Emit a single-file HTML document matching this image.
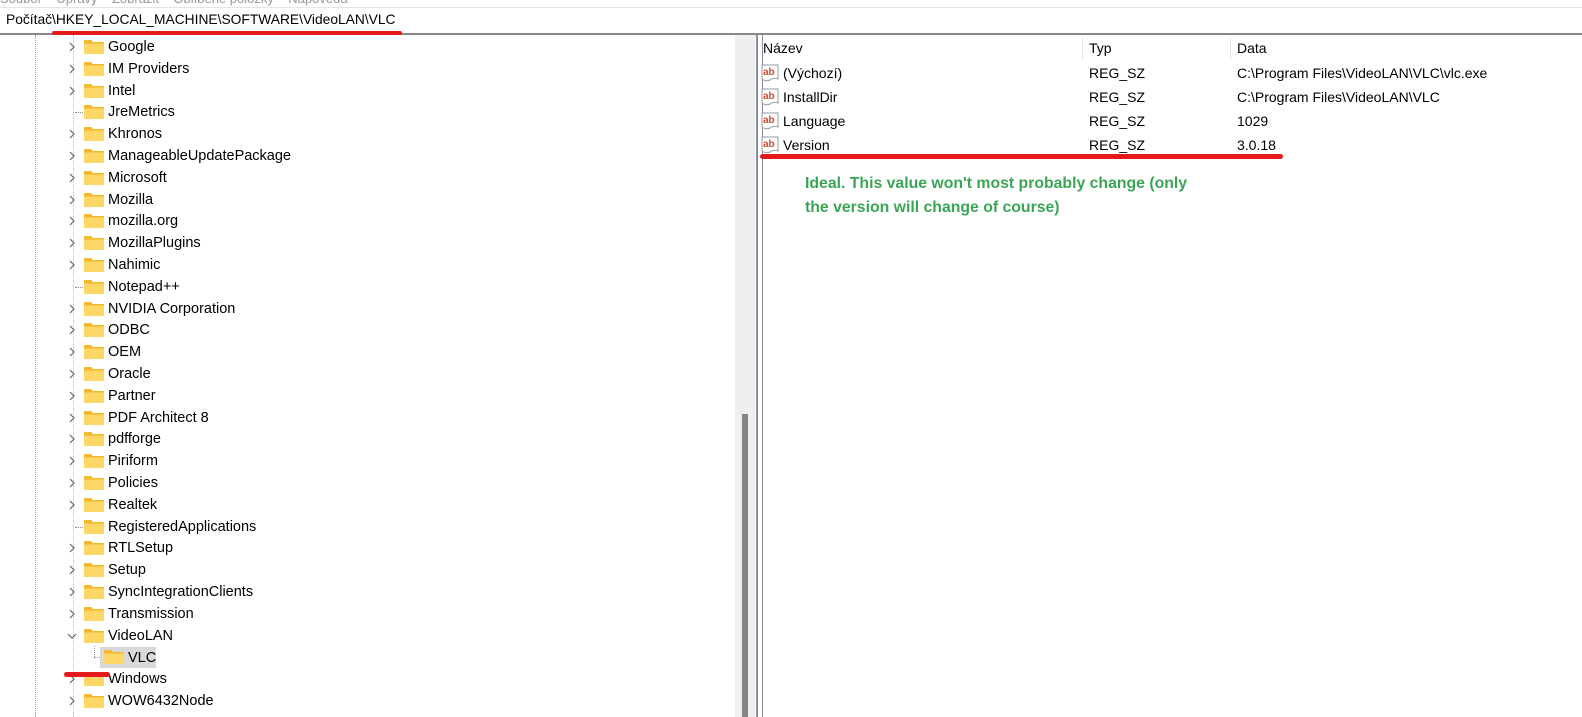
<!DOCTYPE html>
<html><head><meta charset="utf-8"><style>
body{margin:0;width:1582px;height:717px;overflow:hidden;background:#fff;font-family:"Liberation Sans",sans-serif;font-size:14px;color:#000;position:relative}
.a{position:absolute;white-space:nowrap}
.r{position:absolute;left:0;height:22px;line-height:22px;width:730px;font-size:14.5px}
.r .t{position:absolute;left:108px;top:0}
.r .f{position:absolute;left:84px;top:4px;width:20px;height:14px}
.r .c{position:absolute;left:67px;top:6px}
.r .d{position:absolute;left:75px;top:11px;width:8px;border-top:1px dotted #888}
.ab{position:absolute;left:761px;width:19px;height:18px}
.red{position:absolute;background:#e3191c;border-radius:3px}
</style></head><body>
<div class="a" style="left:0;top:-9px;color:#999;font-size:13px">Soubor&nbsp;&nbsp;&nbsp;&nbsp;Úpravy&nbsp;&nbsp;&nbsp;&nbsp;Zobrazit&nbsp;&nbsp;&nbsp;&nbsp;Oblíbené položky&nbsp;&nbsp;&nbsp;&nbsp;Nápověda</div>
<div class="a" style="left:0;top:7px;width:1582px;height:26px;background:#fff;border-top:1px solid #e5e5e5"></div>
<div class="a" style="left:6px;top:12px;font-size:13.8px">Počítač\HKEY_LOCAL_MACHINE\SOFTWARE\VideoLAN\VLC</div>
<div class="a" style="left:0;top:33px;width:1582px;height:2px;background:#888"></div>
<div class="red" style="left:52px;top:31px;width:350px;height:4px"></div>
<div class="a" style="left:35px;top:35px;height:682px;border-left:1px dotted #999"></div>
<div class="a" style="left:73px;top:35px;height:682px;border-left:1px dotted #bbb"></div>
<svg width="0" height="0" style="position:absolute"><defs>
<symbol id="ch" viewBox="0 0 10 10"><path d="M3 1 L7 5 L3 9" fill="none" stroke="#666" stroke-width="1.2"/></symbol>
<symbol id="fo" viewBox="0 0 20 14"><path d="M0 1 Q0 0 1 0 H7 L9 2 H19 Q20 2 20 3 V13 Q20 14 19 14 H1 Q0 14 0 13Z" fill="#f3b72c"/><rect x="0" y="3.5" width="20" height="10.5" rx="1" fill="#fcd766"/></symbol>
<symbol id="abi" viewBox="0 0 19 18"><path d="M1 1 H17 V15 Q13 13 9 16 Q5 18 1 15Z" fill="#fff" stroke="#9a9a9a"/><text x="2" y="11" font-family="Liberation Sans" font-weight="bold" font-size="10" fill="#d2462a">ab</text></symbol>
</defs></svg>
<div class="r" style="top:36px"><svg class="c" width="10" height="10"><use href="#ch"/></svg><svg class="f"><use href="#fo"/></svg><span class="t">Google</span></div>
<div class="r" style="top:57.8px"><svg class="c" width="10" height="10"><use href="#ch"/></svg><svg class="f"><use href="#fo"/></svg><span class="t">IM Providers</span></div>
<div class="r" style="top:79.6px"><svg class="c" width="10" height="10"><use href="#ch"/></svg><svg class="f"><use href="#fo"/></svg><span class="t">Intel</span></div>
<div class="r" style="top:101.4px"><div class="d"></div><svg class="f"><use href="#fo"/></svg><span class="t">JreMetrics</span></div>
<div class="r" style="top:123.2px"><svg class="c" width="10" height="10"><use href="#ch"/></svg><svg class="f"><use href="#fo"/></svg><span class="t">Khronos</span></div>
<div class="r" style="top:145px"><svg class="c" width="10" height="10"><use href="#ch"/></svg><svg class="f"><use href="#fo"/></svg><span class="t">ManageableUpdatePackage</span></div>
<div class="r" style="top:166.8px"><svg class="c" width="10" height="10"><use href="#ch"/></svg><svg class="f"><use href="#fo"/></svg><span class="t">Microsoft</span></div>
<div class="r" style="top:188.6px"><svg class="c" width="10" height="10"><use href="#ch"/></svg><svg class="f"><use href="#fo"/></svg><span class="t">Mozilla</span></div>
<div class="r" style="top:210.4px"><svg class="c" width="10" height="10"><use href="#ch"/></svg><svg class="f"><use href="#fo"/></svg><span class="t">mozilla.org</span></div>
<div class="r" style="top:232.2px"><svg class="c" width="10" height="10"><use href="#ch"/></svg><svg class="f"><use href="#fo"/></svg><span class="t">MozillaPlugins</span></div>
<div class="r" style="top:254px"><svg class="c" width="10" height="10"><use href="#ch"/></svg><svg class="f"><use href="#fo"/></svg><span class="t">Nahimic</span></div>
<div class="r" style="top:275.8px"><div class="d"></div><svg class="f"><use href="#fo"/></svg><span class="t">Notepad++</span></div>
<div class="r" style="top:297.6px"><svg class="c" width="10" height="10"><use href="#ch"/></svg><svg class="f"><use href="#fo"/></svg><span class="t">NVIDIA Corporation</span></div>
<div class="r" style="top:319.4px"><svg class="c" width="10" height="10"><use href="#ch"/></svg><svg class="f"><use href="#fo"/></svg><span class="t">ODBC</span></div>
<div class="r" style="top:341.2px"><svg class="c" width="10" height="10"><use href="#ch"/></svg><svg class="f"><use href="#fo"/></svg><span class="t">OEM</span></div>
<div class="r" style="top:363px"><svg class="c" width="10" height="10"><use href="#ch"/></svg><svg class="f"><use href="#fo"/></svg><span class="t">Oracle</span></div>
<div class="r" style="top:384.8px"><svg class="c" width="10" height="10"><use href="#ch"/></svg><svg class="f"><use href="#fo"/></svg><span class="t">Partner</span></div>
<div class="r" style="top:406.6px"><svg class="c" width="10" height="10"><use href="#ch"/></svg><svg class="f"><use href="#fo"/></svg><span class="t">PDF Architect 8</span></div>
<div class="r" style="top:428.4px"><svg class="c" width="10" height="10"><use href="#ch"/></svg><svg class="f"><use href="#fo"/></svg><span class="t">pdfforge</span></div>
<div class="r" style="top:450.2px"><svg class="c" width="10" height="10"><use href="#ch"/></svg><svg class="f"><use href="#fo"/></svg><span class="t">Piriform</span></div>
<div class="r" style="top:472px"><svg class="c" width="10" height="10"><use href="#ch"/></svg><svg class="f"><use href="#fo"/></svg><span class="t">Policies</span></div>
<div class="r" style="top:493.8px"><svg class="c" width="10" height="10"><use href="#ch"/></svg><svg class="f"><use href="#fo"/></svg><span class="t">Realtek</span></div>
<div class="r" style="top:515.6px"><div class="d"></div><svg class="f"><use href="#fo"/></svg><span class="t">RegisteredApplications</span></div>
<div class="r" style="top:537.4px"><svg class="c" width="10" height="10"><use href="#ch"/></svg><svg class="f"><use href="#fo"/></svg><span class="t">RTLSetup</span></div>
<div class="r" style="top:559.2px"><svg class="c" width="10" height="10"><use href="#ch"/></svg><svg class="f"><use href="#fo"/></svg><span class="t">Setup</span></div>
<div class="r" style="top:581px"><svg class="c" width="10" height="10"><use href="#ch"/></svg><svg class="f"><use href="#fo"/></svg><span class="t">SyncIntegrationClients</span></div>
<div class="r" style="top:602.8px"><svg class="c" width="10" height="10"><use href="#ch"/></svg><svg class="f"><use href="#fo"/></svg><span class="t">Transmission</span></div>
<div class="r" style="top:624.6px"><svg class="c" width="10" height="10" style="transform:rotate(90deg)"><use href="#ch"/></svg><svg class="f"><use href="#fo"/></svg><span class="t">VideoLAN</span></div>
<div class="a" style="left:94px;top:646px;width:1px;height:11px;border-left:1px dotted #999"></div>
<div class="a" style="left:94px;top:657px;width:8px;border-top:1px dotted #999"></div>
<div class="a" style="left:100px;top:647px;width:56px;height:21px;background:#d9d9d9"></div>
<svg class="a" style="left:104px;top:650px" width="20" height="14"><use href="#fo"/></svg>
<div class="a" style="left:128px;top:647px;line-height:22px;font-size:14.5px">VLC</div>
<div class="r" style="top:668.2px"><svg class="c" width="10" height="10"><use href="#ch"/></svg><svg class="f"><use href="#fo"/></svg><span class="t">Windows</span></div>
<div class="r" style="top:690px"><svg class="c" width="10" height="10"><use href="#ch"/></svg><svg class="f"><use href="#fo"/></svg><span class="t">WOW6432Node</span></div>
<div class="red" style="left:64px;top:672px;width:46px;height:5px"></div>
<div class="a" style="left:735px;top:35px;width:20px;height:682px;background:#efefef"></div>
<div class="a" style="left:742px;top:414px;width:6px;height:303px;background:#858585"></div>
<div class="a" style="left:756px;top:35px;width:2px;height:682px;background:#8a8f99"></div>
<div class="a" style="left:762px;top:35px;width:1px;height:682px;background:#8a8f99"></div>
<div class="a" style="left:1082px;top:38px;width:1px;height:22px;background:#e5e5e5"></div>
<div class="a" style="left:1230px;top:38px;width:1px;height:22px;background:#e5e5e5"></div>
<div class="a" style="left:763px;top:40px">Název</div>
<div class="a" style="left:1089px;top:40px">Typ</div>
<div class="a" style="left:1237px;top:40px">Data</div>
<svg class="ab" style="top:64px"><use href="#abi"/></svg>
<svg class="ab" style="top:88px"><use href="#abi"/></svg>
<svg class="ab" style="top:112px"><use href="#abi"/></svg>
<svg class="ab" style="top:136px"><use href="#abi"/></svg>
<div class="a" style="left:783px;top:65px">(Výchozí)</div>
<div class="a" style="left:783px;top:89px">InstallDir</div>
<div class="a" style="left:783px;top:113px">Language</div>
<div class="a" style="left:783px;top:137px">Version</div>
<div class="a" style="left:1089px;top:65px">REG_SZ</div>
<div class="a" style="left:1089px;top:89px">REG_SZ</div>
<div class="a" style="left:1089px;top:113px">REG_SZ</div>
<div class="a" style="left:1089px;top:137px">REG_SZ</div>
<div class="a" style="left:1237px;top:65px">C:\Program Files\VideoLAN\VLC\vlc.exe</div>
<div class="a" style="left:1237px;top:89px">C:\Program Files\VideoLAN\VLC</div>
<div class="a" style="left:1237px;top:113px">1029</div>
<div class="a" style="left:1237px;top:137px">3.0.18</div>
<div class="red" style="left:760px;top:154px;width:523px;height:5px"></div>
<div class="a" style="left:805px;top:172px;color:#3aa655;font-weight:bold;font-size:15.8px;line-height:24px">Ideal. This value won't most probably change (only<br>the version will change of course)</div>
</body></html>
